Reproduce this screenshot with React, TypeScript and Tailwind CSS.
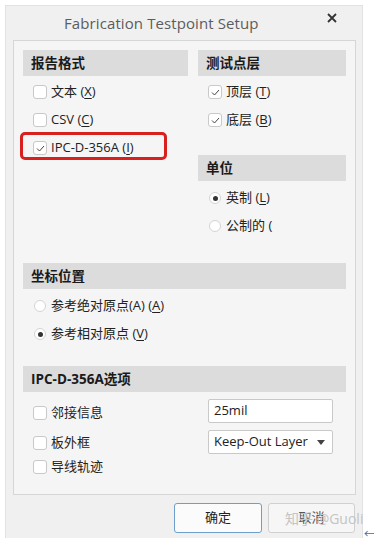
import React from "react"

const font = { fontFamily: '"Open Sans", "Noto Sans CJK SC", sans-serif' }

const Key = ({ k }: { k: string }) => (
    <span>
        (<span className="underline underline-offset-2">{k}</span>)
    </span>
)

const Check = ({ on }: { on?: boolean }) => (
    <span className="flex h-[14px] w-[14px] shrink-0 items-center justify-center rounded-[3px] border border-[#c9c9c9] bg-white">
        {on && (
            <svg width="9" height="7" viewBox="0 0 9 7">
                <polyline points="1,3.5 3.5,6 8,1" fill="none" stroke="#444" strokeWidth="1" />
            </svg>
        )}
    </span>
)

const Radio = ({ on }: { on?: boolean }) => (
    <span className="flex h-[12px] w-[12px] shrink-0 items-center justify-center rounded-full border border-[#d4d4d4] bg-white">
        {on && <span className="h-[5px] w-[5px] rounded-full bg-[#333]" />}
    </span>
)

const Header = ({ children }: { children: React.ReactNode }) => (
    <div className="flex h-[26px] items-center bg-[#dcdcdc] pl-[8px] text-[13.5px] font-bold text-[#1a1a1a]">{children}</div>
)

const CheckRow = ({ on, children }: { on?: boolean; children: React.ReactNode }) => (
    <div className="flex h-[28px] items-center gap-[4px] pl-[10px] text-[13px] text-[#222]">
        <Check on={on} />
        <span>{children}</span>
    </div>
)

const RadioRow = ({ on, children }: { on?: boolean; children: React.ReactNode }) => (
    <div className="flex h-[28px] items-center gap-[5px] pl-[11px] text-[13px] text-[#222]">
        <Radio on={on} />
        <span>{children}</span>
    </div>
)

export default function App() {
    return (
        <div className="relative h-[538px] w-[374px] overflow-hidden bg-white" style={font}>
            <div className="ml-[5px] mt-[5px] flex h-[540px] w-[358px] flex-col border border-[#e2e2e2] bg-[#f0f0f0]">
                {/* title bar */}
                <div className="relative flex h-[34px] items-center pl-[58px]">
                    <span className="text-[15px] tracking-[0.1px] text-[#5c5c5c]">Fabrication Testpoint Setup</span>
                    <svg className="absolute right-[25px] top-[7px]" width="10" height="10" viewBox="0 0 10 10">
                        <path d="M1 1 L9 9 M9 1 L1 9" stroke="#333" strokeWidth="1.8" />
                    </svg>
                </div>

                {/* main panel */}
                <div className="ml-[7px] h-[455px] w-[343px] border border-[#d6d6d6] bg-[#f5f5f5] px-[9px] pt-[9px]">
                    <div className="flex gap-[10px]">
                        <div className="w-[165px]">
                            <Header>报告格式</Header>
                            <div className="mt-[2px]">
                                <CheckRow>
                                    文本 <Key k="X" />
                                </CheckRow>
                                <CheckRow>
                                    CSV <Key k="C" />
                                </CheckRow>
                                <div className="relative">
                                    <CheckRow on>
                                        IPC-D-356A <Key k="I" />
                                    </CheckRow>
                                    <div className="absolute left-[-3px] top-[-2px] h-[28px] w-[147px] rounded-[5px] border-[3px] border-[#d8201e]" />
                                </div>
                            </div>
                        </div>
                        <div className="w-[148px]">
                            <Header>测试点层</Header>
                            <div className="mt-[2px]">
                                <CheckRow on>
                                    顶层 <Key k="T" />
                                </CheckRow>
                                <CheckRow on>
                                    底层 <Key k="B" />
                                </CheckRow>
                            </div>
                            <div className="mt-[21px]">
                                <Header>单位</Header>
                                <div className="mt-[3px]">
                                    <RadioRow on>
                                        英制 <Key k="L" />
                                    </RadioRow>
                                    <RadioRow>公制的 (</RadioRow>
                                </div>
                            </div>
                        </div>
                    </div>

                    <div className="mt-[23px]">
                        <Header>坐标位置</Header>
                        <div className="mt-[3px]">
                            <RadioRow>
                                参考绝对原点(A) <Key k="A" />
                            </RadioRow>
                            <RadioRow on>
                                参考相对原点 <Key k="V" />
                            </RadioRow>
                        </div>
                    </div>

                    <div className="mt-[18px]">
                        <Header>IPC-D-356A选项</Header>
                        <div className="mt-[7px] flex gap-[10px]">
                            <div className="flex w-[165px] flex-col">
                                <div className="h-[24px]">
                                    <CheckRow>邻接信息</CheckRow>
                                </div>
                                <div className="mt-[6px] h-[24px]">
                                    <CheckRow>板外框</CheckRow>
                                </div>
                                <div className="h-[24px]">
                                    <CheckRow>导线轨迹</CheckRow>
                                </div>
                            </div>
                            <div className="flex flex-col gap-[7px] pl-[10px]">
                                <div className="flex h-[24px] w-[125px] items-center rounded-[2px] border border-[#c9c9c9] bg-white pl-[5px] text-[13px] text-[#222]">
                                    25mil
                                </div>
                                <div className="flex h-[24px] w-[125px] items-center justify-between rounded-[2px] border border-[#c9c9c9] bg-white pl-[5px] pr-[7px] text-[13px] text-[#222]">
                                    <span>Keep-Out Layer</span>
                                    <svg width="8" height="5" viewBox="0 0 8 5">
                                        <path d="M0 0 L8 0 L4 5 Z" fill="#444" />
                                    </svg>
                                </div>
                            </div>
                        </div>
                    </div>
                </div>

                {/* buttons */}
                <div className="mt-[8px] flex justify-end gap-[6px] pr-[7px]">
                    <button className="flex h-[30px] w-[88px] items-center justify-center rounded-[3px] border border-[#6e9fcc] bg-[#fbfbfb] text-[13px] text-[#222]">
                        确定
                    </button>
                    <button className="relative flex h-[30px] w-[87px] items-center justify-center rounded-[3px] border border-[#d0d0d0] bg-[#f6f6f6] text-[13px] text-[#555]">
                        取消
                        <span className="absolute left-[16px] top-[4px] whitespace-nowrap text-[14px] text-[#c4c4c4]">知乎 @Guoli</span>
                    </button>
                </div>
            </div>
            <span className="absolute bottom-[-4px] right-[-1px] text-[11px] text-[#666]">←</span>
        </div>
    )
}
